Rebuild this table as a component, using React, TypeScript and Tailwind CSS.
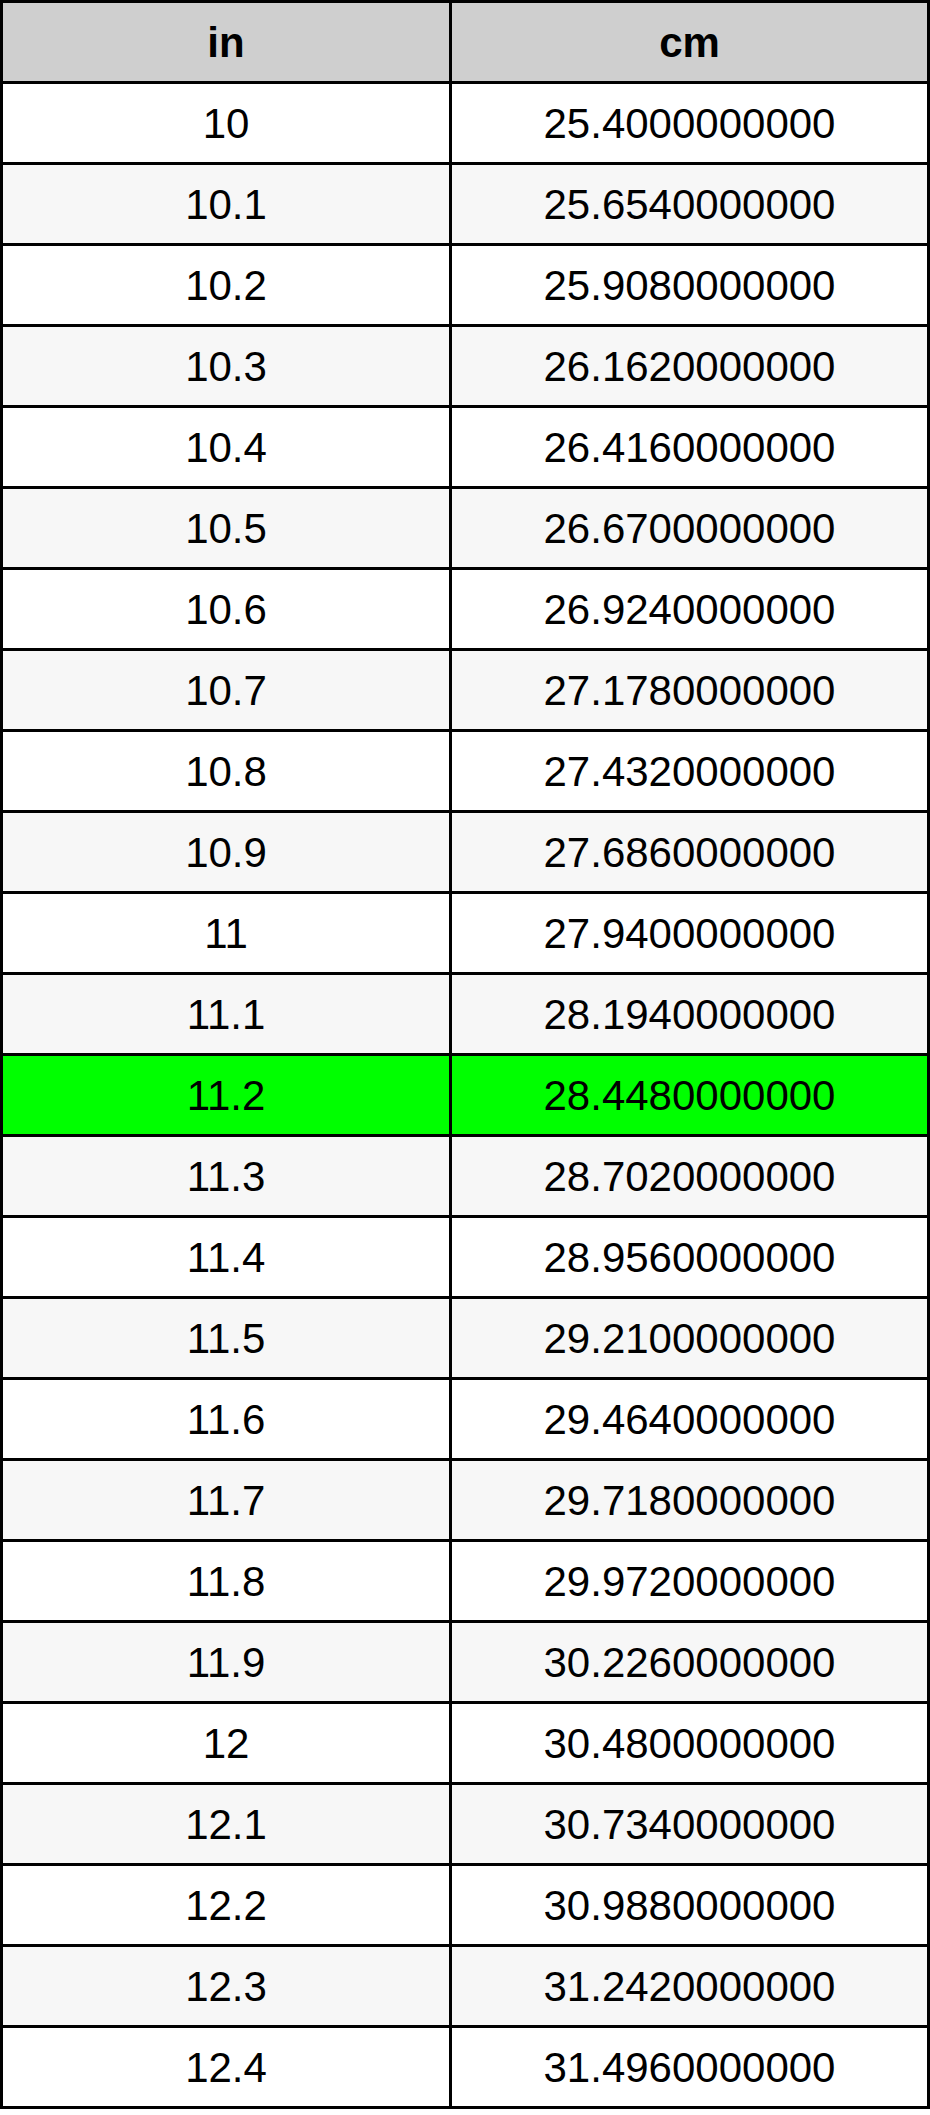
import React from "react";

const rows = [
  ["10", "25.4000000000"],
  ["10.1", "25.6540000000"],
  ["10.2", "25.9080000000"],
  ["10.3", "26.1620000000"],
  ["10.4", "26.4160000000"],
  ["10.5", "26.6700000000"],
  ["10.6", "26.9240000000"],
  ["10.7", "27.1780000000"],
  ["10.8", "27.4320000000"],
  ["10.9", "27.6860000000"],
  ["11", "27.9400000000"],
  ["11.1", "28.1940000000"],
  ["11.2", "28.4480000000"],
  ["11.3", "28.7020000000"],
  ["11.4", "28.9560000000"],
  ["11.5", "29.2100000000"],
  ["11.6", "29.4640000000"],
  ["11.7", "29.7180000000"],
  ["11.8", "29.9720000000"],
  ["11.9", "30.2260000000"],
  ["12", "30.4800000000"],
  ["12.1", "30.7340000000"],
  ["12.2", "30.9880000000"],
  ["12.3", "31.2420000000"],
  ["12.4", "31.4960000000"],
];

export default function App() {
  return (
    <div className="w-[930px] bg-white font-['Liberation_Sans',Arial,sans-serif] text-[42px] text-black">
      <div className="border-[3px] border-black">
        {/* Header */}
        <div className="grid h-[78px] grid-cols-[449px_1fr] bg-[#cfcfcf] font-bold">
          <div className="flex items-center justify-center border-r-[3px] border-black">in</div>
          <div className="flex items-center justify-center">cm</div>
        </div>

        {rows.map(([inch, cm], i) => {
          const bg = inch === "11.2" ? "bg-[#00ff00]" : i % 2 === 1 ? "bg-[#f7f7f7]" : "bg-white";
          return (
            <div key={inch} className={`grid h-[81px] grid-cols-[449px_1fr] border-t-[3px] border-black ${bg}`}>
              <div className="flex items-center justify-center border-r-[3px] border-black">{inch}</div>
              <div className="flex items-center justify-center">{cm}</div>
            </div>
          );
        })}
      </div>
    </div>
  );
}
